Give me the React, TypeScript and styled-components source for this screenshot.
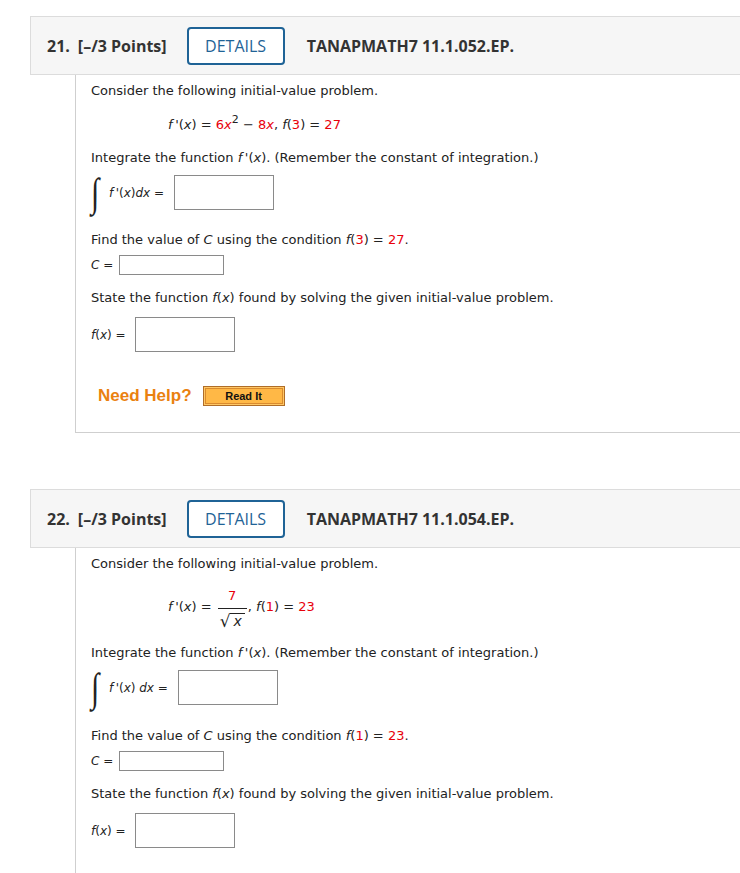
import React from "react";
import styled, { createGlobalStyle } from "styled-components";

const GlobalStyle = createGlobalStyle`
  html, body {
    margin: 0;
    padding: 0;
    background: #fff;
    overflow-x: hidden;
  }
`;

const Page = styled.div`
  padding: 16px 0 40px 30px;
`;

const Question = styled.section`
  & + & {
    margin-top: 56px;
  }
`;

const Header = styled.header`
  height: 57px;
  display: flex;
  align-items: center;
  padding-left: 16px;
  background: #f6f6f6;
  border: 1px solid #dcdcdc;
  border-right: none;
  font-family: "Open Sans", "Liberation Sans", sans-serif;
  font-size: 16px;
  color: #333;
`;

const Number = styled.span`
  font-weight: 700;
  margin-right: 8px;
`;

const Points = styled.span`
  font-weight: 700;
  margin-right: 20px;
`;

const DetailsButton = styled.button`
  width: 98px;
  height: 38px;
  margin-right: 22px;
  border: 2px solid #1f6396;
  border-radius: 4px;
  background: #fff;
  color: #1f6396;
  font-family: "Open Sans", "Liberation Sans", sans-serif;
  font-size: 16px;
  padding: 0;
  cursor: pointer;
`;

const Code = styled.span`
  font-weight: 700;
`;

const Body = styled.div`
  margin-left: 45px;
  border-left: 1px solid #cfcfcf;
  border-bottom: 1px solid #cfcfcf;
  padding: 8px 16px 26px 15px;
  font-family: "DejaVu Sans", Verdana, sans-serif;
  font-size: 13px;
  line-height: 16px;
  color: #222;
`;

const Para = styled.div<{ $top?: number }>`
  margin-top: ${(p) => p.$top ?? 0}px;
  white-space: nowrap;
`;

const I = styled.i`
  font-style: italic;
`;

const Red = styled.span`
  color: #e8000b;
`;

const Sup = styled.sup`
  font-size: 11px;
  line-height: 0;
  vertical-align: 6px;
`;

const EqRow = styled.div<{ $top: number }>`
  margin-top: ${(p) => p.$top}px;
  padding-left: 77px;
  display: flex;
  align-items: center;
  white-space: pre;
`;

const Fraction = styled.span`
  display: inline-flex;
  flex-direction: column;
  align-items: center;
  margin: 4px 1px 0 6px;
`;

const Numer = styled.span`
  padding: 0 4px 4px;
  border-bottom: 1px solid #222;
  line-height: 16px;
  width: 100%;
  text-align: center;
  box-sizing: border-box;
`;

const Denom = styled.span`
  padding: 3px 2px 0;
  line-height: 18px;
  display: inline-flex;
  align-items: flex-end;
`;

const RootSign = styled.span`
  font-size: 17px;
  line-height: 18px;
`;

const Radicand = styled.span`
  border-top: 1px solid #222;
  font-size: 14px;
  line-height: 15px;
  padding: 0 3px;
  margin-bottom: 1px;
`;

const AnswerRow = styled.div<{ $top: number }>`
  margin-top: ${(p) => p.$top}px;
  display: flex;
  align-items: center;
  white-space: pre;
`;

const IntegralSign = styled.span`
  font-family: "Liberation Serif", serif;
  font-size: 40px;
  line-height: 37px;
  height: 37px;
  width: 10px;
  margin-right: 8px;
  display: inline-block;
  transform: scaleX(0.75);
  transform-origin: left center;
`;

const SmallMath = styled.span`
  font-size: 12px;
  margin-right: 10px;
`;

const Label = styled.span`
  font-size: 12px;
  margin-right: 6px;
`;

const Answer = styled.input<{ $w: number; $h: number }>`
  width: ${(p) => p.$w}px;
  height: ${(p) => p.$h}px;
  box-sizing: border-box;
  border: 1px solid #8a8a8a;
  margin: 0;
  padding: 0 4px;
  background: #fff;
`;

const HelpRow = styled.div`
  margin-top: 34px;
  padding-left: 7px;
  display: flex;
  align-items: center;
`;

const NeedHelp = styled.span`
  font-family: "Liberation Sans", Arial, sans-serif;
  font-weight: 700;
  font-size: 17px;
  color: #ea8110;
  margin-right: 11px;
`;

const ReadIt = styled.button`
  width: 82px;
  height: 20px;
  padding: 0;
  background: #ffb846;
  border: 1px solid #b06d28;
  box-shadow: inset 0 0 0 1px #ffc866, inset 0 0 0 2px #d98a2e;
  font-family: "Liberation Sans", Arial, sans-serif;
  font-weight: 700;
  font-size: 11px;
  color: #111;
  cursor: pointer;
`;

const Fp = () => (
  <>
    <I>f</I>&#8239;'(<I>x</I>)
  </>
);

const Q21 = () => (
  <Question>
    <Header>
      <Number>21.</Number>
      <Points>[–/3 Points]</Points>
      <DetailsButton>DETAILS</DetailsButton>
      <Code>TANAPMATH7 11.1.052.EP.</Code>
    </Header>
    <Body>
      <Para>Consider the following initial-value problem.</Para>
      <EqRow $top={18}>
        <span>
          <Fp /> = <Red>6<I>x</I></Red>
          <Sup>2</Sup> − <Red>8<I>x</I></Red>, <I>f</I>(<Red>3</Red>) = <Red>27</Red>
        </span>
      </EqRow>
      <Para $top={17}>
        Integrate the function <Fp />. (Remember the constant of integration.)
      </Para>
      <AnswerRow $top={8}>
        <IntegralSign>∫</IntegralSign>
        <SmallMath>
          <Fp />
          <I>dx</I> =
        </SmallMath>
        <Answer $w={100} $h={35} />
      </AnswerRow>
      <Para $top={21}>
        Find the value of <I>C</I> using the condition <I>f</I>(<Red>3</Red>) ={" "}
        <Red>27</Red>.
      </Para>
      <AnswerRow $top={7}>
        <Label>
          <I>C</I> =
        </Label>
        <Answer $w={105} $h={20} />
      </AnswerRow>
      <Para $top={15}>
        State the function <I>f</I>(<I>x</I>) found by solving the given initial-value
        problem.
      </Para>
      <AnswerRow $top={11}>
        <Label>
          <I>f</I>(<I>x</I>) ={" "}
        </Label>
        <Answer $w={100} $h={35} />
      </AnswerRow>
      <HelpRow>
        <NeedHelp>Need Help?</NeedHelp>
        <ReadIt>Read It</ReadIt>
      </HelpRow>
    </Body>
  </Question>
);

const Q22 = () => (
  <Question>
    <Header>
      <Number>22.</Number>
      <Points>[–/3 Points]</Points>
      <DetailsButton>DETAILS</DetailsButton>
      <Code>TANAPMATH7 11.1.054.EP.</Code>
    </Header>
    <Body>
      <Para>Consider the following initial-value problem.</Para>
      <EqRow $top={12}>
        <span>
          <Fp /> =
        </span>
        <Fraction>
          <Numer>
            <Red>7</Red>
          </Numer>
          <Denom>
            <RootSign>√</RootSign>
            <Radicand>
              <I>x</I>
            </Radicand>
          </Denom>
        </Fraction>
        <span>
          , <I>f</I>(<Red>1</Red>) = <Red>23</Red>
        </span>
      </EqRow>
      <Para $top={15}>
        Integrate the function <Fp />. (Remember the constant of integration.)
      </Para>
      <AnswerRow $top={8}>
        <IntegralSign>∫</IntegralSign>
        <SmallMath>
          <Fp /> <I>dx</I> =
        </SmallMath>
        <Answer $w={100} $h={35} />
      </AnswerRow>
      <Para $top={22}>
        Find the value of <I>C</I> using the condition <I>f</I>(<Red>1</Red>) ={" "}
        <Red>23</Red>.
      </Para>
      <AnswerRow $top={7}>
        <Label>
          <I>C</I> =
        </Label>
        <Answer $w={105} $h={20} />
      </AnswerRow>
      <Para $top={15}>
        State the function <I>f</I>(<I>x</I>) found by solving the given initial-value
        problem.
      </Para>
      <AnswerRow $top={11}>
        <Label>
          <I>f</I>(<I>x</I>) ={" "}
        </Label>
        <Answer $w={100} $h={35} />
      </AnswerRow>
    </Body>
  </Question>
);

const App = () => (
  <>
    <GlobalStyle />
    <Page>
      <Q21 />
      <Q22 />
    </Page>
  </>
);

export default App;
